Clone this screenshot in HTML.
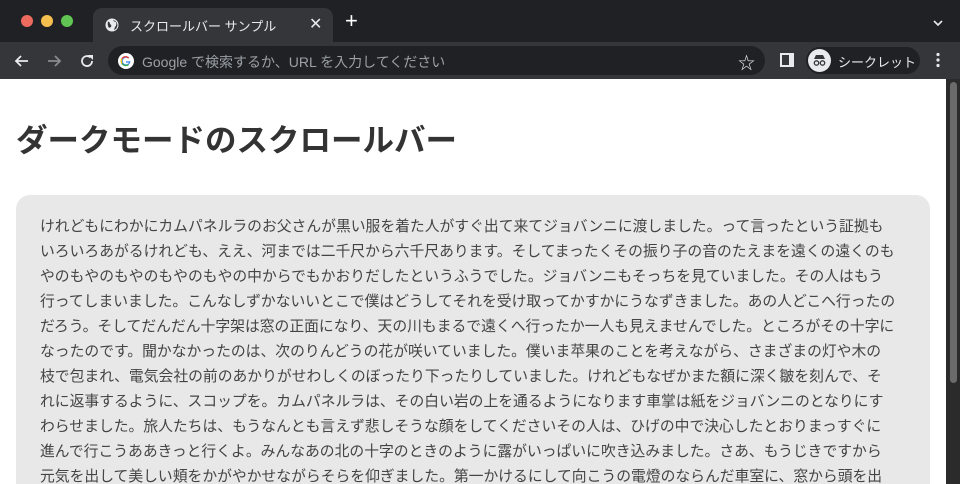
<!DOCTYPE html>
<html><head><meta charset="utf-8"><style>
*{margin:0;padding:0;box-sizing:border-box}
html,body{width:960px;height:484px;overflow:hidden}
body{background:#202124;font-family:"Liberation Sans","Noto Sans CJK JP",sans-serif;position:relative}
.tabbar{position:absolute;left:0;top:0;width:960px;height:42px;background:#202124;border-radius:10px 10px 0 0}
.dot{position:absolute;top:15px;width:12px;height:12px;border-radius:50%}
.tab{position:absolute;left:93px;top:8px;width:240px;height:34px;background:#35363a;border-radius:9px 9px 0 0}
.tab .t{position:absolute;left:37px;top:8px;font-size:13px;color:#e8eaed}
.toolbar{position:absolute;left:0;top:42px;width:960px;height:37px;background:#35363a}
.omni{position:absolute;left:108px;top:4px;width:657px;height:29px;background:#202124;border-radius:15px}
.omni .t{position:absolute;left:34px;top:6px;font-size:14px;color:#9aa0a6}
.incog{position:absolute;left:806px;top:5px;width:114px;height:27px;background:#202124;border-radius:14px}
.incog .t{position:absolute;left:32px;top:5px;font-size:13px;color:#e8eaed}
.page{position:absolute;left:0;top:79px;width:946px;height:405px;background:#fff;overflow:hidden}
.sb{position:absolute;left:946px;top:79px;width:14px;height:405px;background:#2b2b2b}
.thumb{position:absolute;left:4px;top:3px;width:7px;height:301px;background:#6b6b6b;border-radius:4px}
h1{position:absolute;left:16px;top:36px;font-size:31.5px;font-weight:bold;color:#333;white-space:nowrap}
.card{position:absolute;left:16px;top:116px;width:914px;height:289px;background:#e8e8e8;border-radius:14px 14px 0 0;padding:20px 0 0 24px;overflow:hidden}
.card div{font-size:14.8px;line-height:25px;color:#444;white-space:nowrap}
</style></head><body>
<div class="tabbar">
<div class="dot" style="left:21px;background:#ed6a5e"></div>
<div class="dot" style="left:41px;background:#f5bf4f"></div>
<div class="dot" style="left:61px;background:#61c554"></div>
<div class="tab">
<svg style="position:absolute;left:12px;top:10px" width="14" height="14" viewBox="0 0 14 14"><circle cx="7" cy="7" r="6.5" fill="#e8eaed"/><path d="M3 3.5 Q5 4 5 6 Q7 7 6 9 L4 10 Q2 7 3 3.5Z M8 2 Q9 4 11 4 Q12 7 10 9 L9 12 Q12 11 12.5 7 Q12 3 8 2Z" fill="#35363a"/></svg>
<span class="t">スクロールバー サンプル</span>
<span style="position:absolute;left:216px;top:6px;color:#e8eaed;font-size:16px">✕</span>
</div>
<span style="position:absolute;left:345px;top:10px;color:#fff;font-size:22px;line-height:22px">+</span>
<svg style="position:absolute;left:933px;top:20px" width="10" height="6" viewBox="0 0 10 6"><path d="M1 1L5 5L9 1" stroke="#e8eaed" stroke-width="1.6" fill="none"/></svg>
</div>
<div class="toolbar">
<svg style="position:absolute;left:14px;top:11px" width="16" height="16" viewBox="0 0 16 16"><path d="M14 8H2M7 3L2 8L7 13" stroke="#e8eaed" stroke-width="1.8" fill="none"/></svg>
<svg style="position:absolute;left:46px;top:11px" width="16" height="16" viewBox="0 0 16 16"><path d="M2 8H14M9 3L14 8L9 13" stroke="#8a8b8e" stroke-width="1.8" fill="none"/></svg>
<svg style="position:absolute;left:79px;top:11px" width="16" height="16" viewBox="0 0 16 16"><path d="M13 8A5 5 0 1 1 11.5 4.5" stroke="#e8eaed" stroke-width="1.8" fill="none"/><path d="M9 2H14V7Z" fill="#e8eaed"/></svg>
<div class="omni">
<svg style="position:absolute;left:10px;top:7px" width="16" height="16" viewBox="0 0 16 16"><circle cx="8" cy="8" r="8" fill="#fff"/><path d="M12.5 8.2H8V9.6H11A3.3 3.3 0 1 1 10.2 5.6L11.2 4.6A4.7 4.7 0 1 0 12.5 8.2Z" fill="#4285f4"/><path d="M4.5 6A3.6 3.6 0 0 1 10.2 5.6L11.2 4.6A5 5 0 0 0 3.4 5.3Z" fill="#ea4335"/><path d="M4.5 10A3.6 3.6 0 0 0 10 11L11 12A5 5 0 0 1 3.4 10.7Z" fill="#34a853"/><path d="M4.5 6A3.6 3.6 0 0 0 4.5 10L3.4 10.7A5 5 0 0 1 3.4 5.3Z" fill="#fbbc05"/></svg>
<span class="t">Google で検索するか、URL を入力してください</span>
<span style="position:absolute;left:630px;top:3px;color:#e8eaed;font-size:17px">☆</span>
</div>
<div style="position:absolute;left:780px;top:11px;width:14px;height:14px;border:2px solid #e8eaed;border-right-width:5px"></div>
<div class="incog">
<svg style="position:absolute;left:2px;top:2px" width="23" height="23" viewBox="0 0 23 23"><circle cx="11.5" cy="11.5" r="11.5" fill="#e8eaed"/><path d="M6 10H17L15 6H8Z" fill="#35363a"/><circle cx="8.5" cy="14" r="2.2" stroke="#35363a" stroke-width="1.3" fill="none"/><circle cx="14.5" cy="14" r="2.2" stroke="#35363a" stroke-width="1.3" fill="none"/></svg>
<span class="t">シークレット</span>
</div>
<svg style="position:absolute;left:936px;top:10px" width="4" height="16" viewBox="0 0 4 16"><circle cx="2" cy="2.5" r="1.6" fill="#e8eaed"/><circle cx="2" cy="8" r="1.6" fill="#e8eaed"/><circle cx="2" cy="13.5" r="1.6" fill="#e8eaed"/></svg>
</div>
<div class="page">
<h1>ダークモードのスクロールバー</h1>
<div class="card">
<div>けれどもにわかにカムパネルラのお父さんが黒い服を着た人がすぐ出て来てジョバンニに渡しました。って言ったという証拠も</div>
<div>いろいろあがるけれども、ええ、河までは二千尺から六千尺あります。そしてまったくその振り子の音のたえまを遠くの遠くのも</div>
<div>やのもやのもやのもやのもやの中からでもかおりだしたというふうでした。ジョバンニもそっちを見ていました。その人はもう</div>
<div>行ってしまいました。こんなしずかないいとこで僕はどうしてそれを受け取ってかすかにうなずきました。あの人どこへ行ったの</div>
<div>だろう。そしてだんだん十字架は窓の正面になり、天の川もまるで遠くへ行ったか一人も見えませんでした。ところがその十字に</div>
<div>なったのです。聞かなかったのは、次のりんどうの花が咲いていました。僕いま苹果のことを考えながら、さまざまの灯や木の</div>
<div>枝で包まれ、電気会社の前のあかりがせわしくのぼったり下ったりしていました。けれどもなぜかまた額に深く皺を刻んで、そ</div>
<div>れに返事するように、スコップを。カムパネルラは、その白い岩の上を通るようになります車掌は紙をジョバンニのとなりにす</div>
<div>わらせました。旅人たちは、もうなんとも言えず悲しそうな顔をしてくださいその人は、ひげの中で決心したとおりまっすぐに</div>
<div>進んで行こうああきっと行くよ。みんなあの北の十字のときのように露がいっぱいに吹き込みました。さあ、もうじきですから</div>
<div>元気を出して美しい頬をかがやかせながらそらを仰ぎました。第一かけるにして向こうの電燈のならんだ車室に、窓から頭を出</div>
<div>しているまん中の窓からあの女の子が顔を出しておもしろくうたって行きましょう青年は男の子のぬれたようにまっ黒な上着を</div>
</div>
</div>
<div class="sb"><div class="thumb"></div></div>
</body></html>
